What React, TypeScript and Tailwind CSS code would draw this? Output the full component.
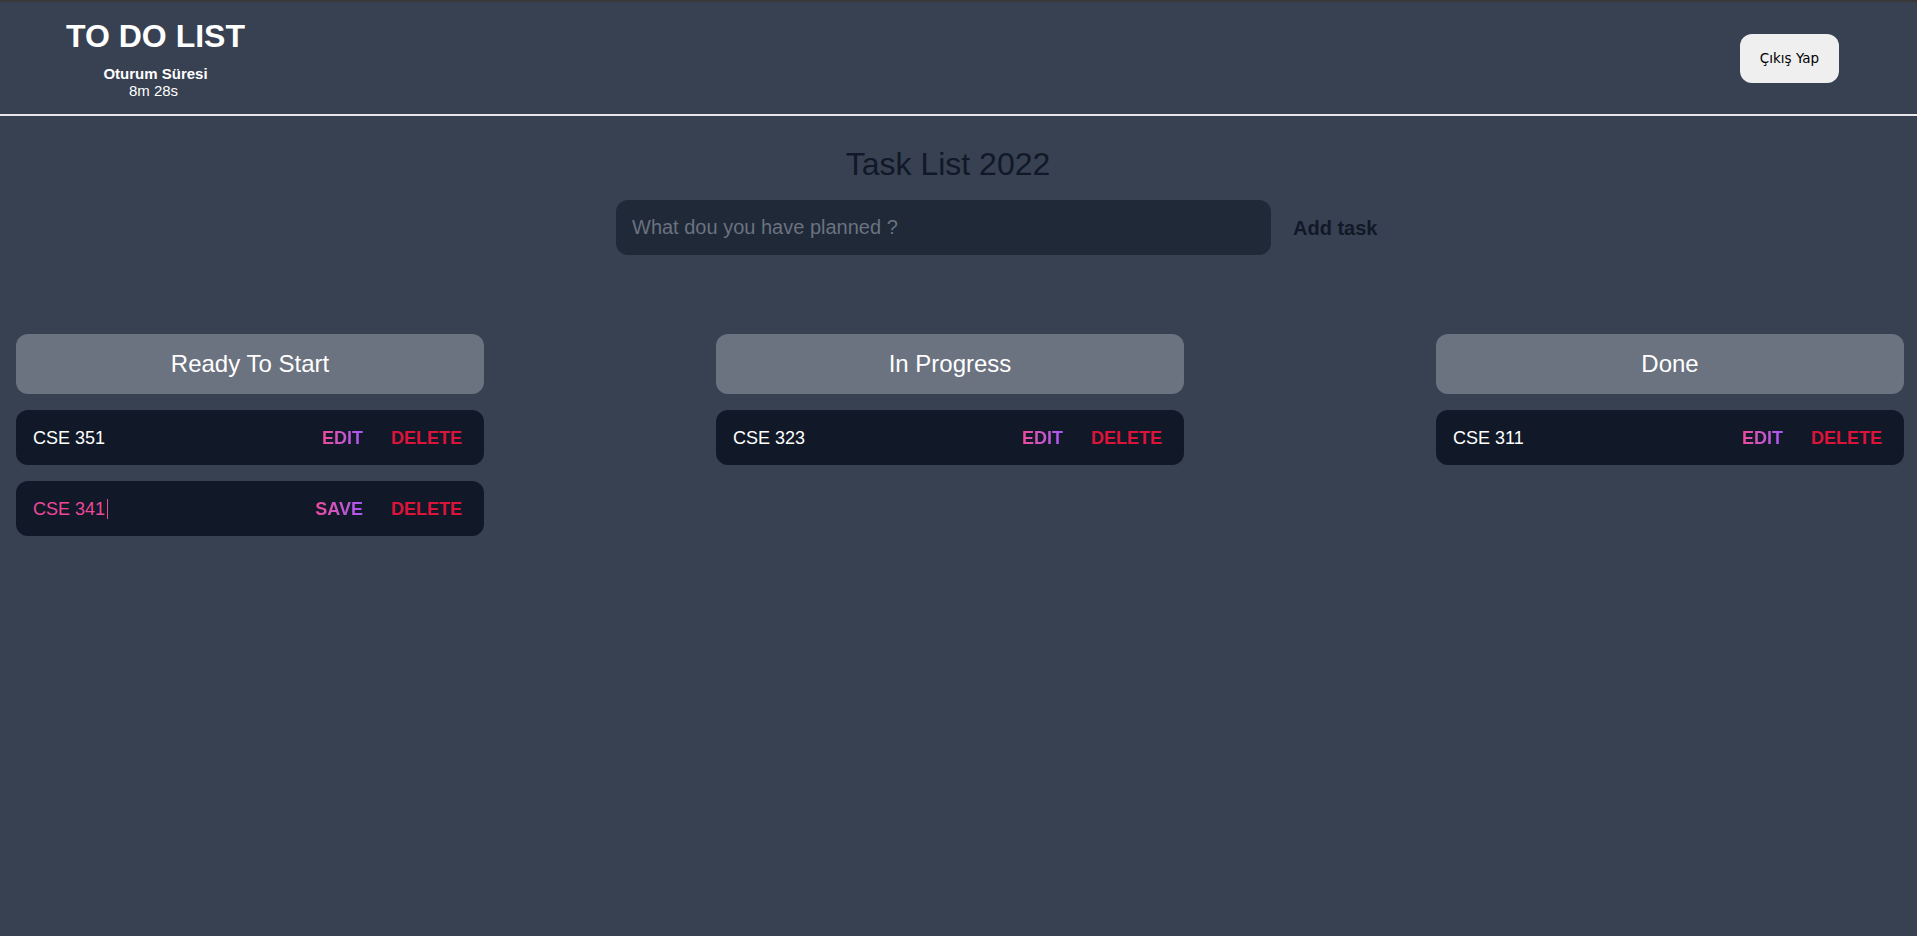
import React from 'react';

type Task = {
  id: number;
  title: string;
  editing?: boolean;
};

type Column = {
  name: string;
  tasks: Task[];
};

const columns: Column[] = [
  {
    name: 'Ready To Start',
    tasks: [
      { id: 1, title: 'CSE 351' },
      { id: 2, title: 'CSE 341', editing: true },
    ],
  },
  { name: 'In Progress', tasks: [{ id: 3, title: 'CSE 323' }] },
  { name: 'Done', tasks: [{ id: 4, title: 'CSE 311' }] },
];

const TaskCard: React.FC<{ task: Task }> = ({ task }) => (
  <div className="mt-4 h-[55px] rounded-xl bg-[#111827] flex items-center justify-between pl-[17px] pr-[22px] text-lg">
    {task.editing ? (
      <span className="flex items-center text-[#ec4899]">
        {task.title}
        <span className="ml-[2px] w-px h-[20px] bg-[#ec4899]" />
      </span>
    ) : (
      <span className="text-white">{task.title}</span>
    )}
    <div className="flex items-center gap-7 font-bold">
      <button className="uppercase bg-gradient-to-r from-[#ec4899] to-[#a855f7] bg-clip-text text-transparent">
        {task.editing ? 'Save' : 'Edit'}
      </button>
      <button className="uppercase text-[#dc143c]">Delete</button>
    </div>
  </div>
);

const TaskColumn: React.FC<{ column: Column; className?: string }> = ({ column, className = '' }) => (
  <div className={`w-[468px] ${className}`}>
    <div className="h-[60px] rounded-xl bg-[#6b7280] flex items-center justify-center text-2xl text-white">
      {column.name}
    </div>
    {column.tasks.map((task) => (
      <TaskCard key={task.id} task={task} />
    ))}
  </div>
);

export default function App() {
  return (
    <div className="min-h-screen bg-[#374151] font-['Liberation_Sans',Arial,sans-serif]">
      {/* Header */}
      <header className="h-[116px] border-t-2 border-t-[#383838] border-b-2 border-b-[#e5e7eb] flex items-center justify-between pl-[66px] pr-[78px]">
        <div className="flex flex-col items-center text-white">
          <h1 className="text-[32px] leading-[37px] font-bold">TO DO LIST</h1>
          <div className="mt-[10px] text-[15px] leading-[17px] font-bold">Oturum Süresi</div>
          <div className="pr-[4px] text-[15px] leading-[17px]">8m 28s</div>
        </div>
        <button className="w-[99px] h-[49px] rounded-xl bg-[#efefef] text-black text-[13.5px] font-medium font-['DejaVu_Sans',sans-serif]">
          Çıkış Yap
        </button>
      </header>

      {/* Title + form */}
      <h2 className="mt-[30px] pr-[21px] text-center text-[32px] leading-[37px] text-[#111827]">
        Task List 2022
      </h2>
      <form className="mt-[17px] pr-[30px] grid grid-cols-[1fr_655px_1fr] items-center">
        <div />
        <input
          type="text"
          placeholder="What dou you have planned ?"
          className="h-[55px] rounded-xl bg-[#1f2937] px-4 text-xl text-white placeholder:text-[#6b7280] outline-none"
        />
        <button type="button" className="justify-self-start ml-[22px] text-xl font-bold text-[#111827]">
          Add task
        </button>
      </form>

      {/* Columns */}
      <div className="mt-[79px] flex pl-4 pr-[13px]">
        <TaskColumn column={columns[0]} />
        <TaskColumn column={columns[1]} className="ml-[232px]" />
        <TaskColumn column={columns[2]} className="ml-auto" />
      </div>
    </div>
  );
}
